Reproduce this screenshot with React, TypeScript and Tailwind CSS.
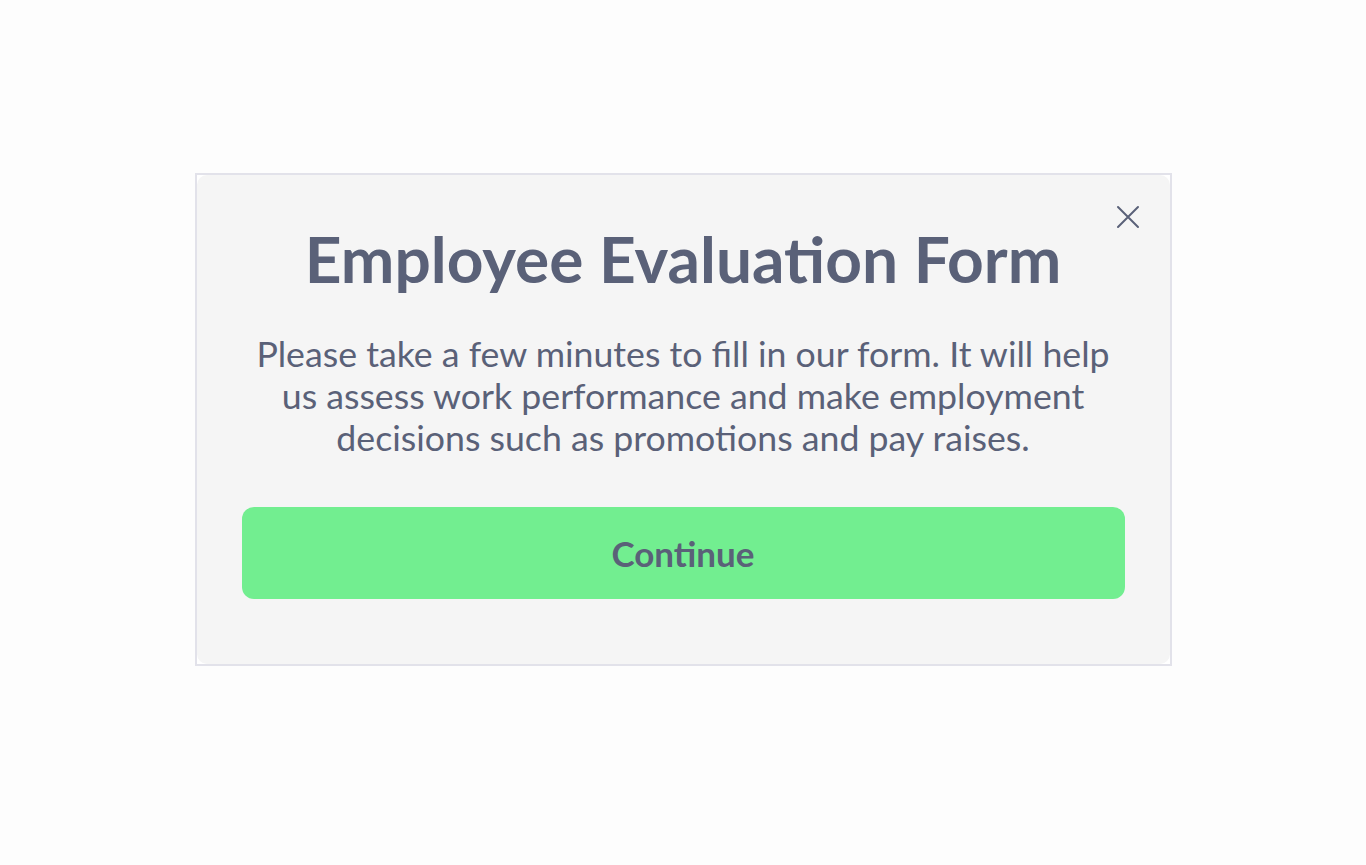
import React from "react";

export default function App() {
  return (
    <div className="min-h-[865px] w-full bg-[#fdfdfd] pt-[173px]" style={{ fontFamily: "Lato, 'Noto Sans', sans-serif" }}>
      <div className="mx-auto w-[977px] border-2 border-[#e2e2ea] bg-white">
        <div className="relative rounded-[10px] bg-[#f5f5f5] px-[45px] pt-[46px] pb-[65px]">
          <button className="absolute right-[30px] top-[30px] text-[#5a6178]" aria-label="Close">
            <svg width="24" height="24" viewBox="0 0 24 24" fill="none" stroke="currentColor" strokeWidth="2" strokeLinecap="round">
              <path d="M2 2L22 22M22 2L2 22" />
            </svg>
          </button>
          <h1 className="text-center text-[64px] font-bold leading-[76px] text-[#5a6178]">Employee Evaluation Form</h1>
          <p className="mx-auto mt-[36px] text-center text-[35.7px] leading-[42px] text-[#5a6178]">
            Please take a few minutes to fill in our form. It will help
            <br />
            us assess work performance and make employment
            <br />
            decisions such as promotions and pay raises.
          </p>
          <button className="mt-[48px] flex h-[92px] w-full items-center justify-center rounded-[12px] bg-[#72ee90] text-[35px] font-bold text-[#5a6178]">
            Continue
          </button>
        </div>
      </div>
    </div>
  );
}
